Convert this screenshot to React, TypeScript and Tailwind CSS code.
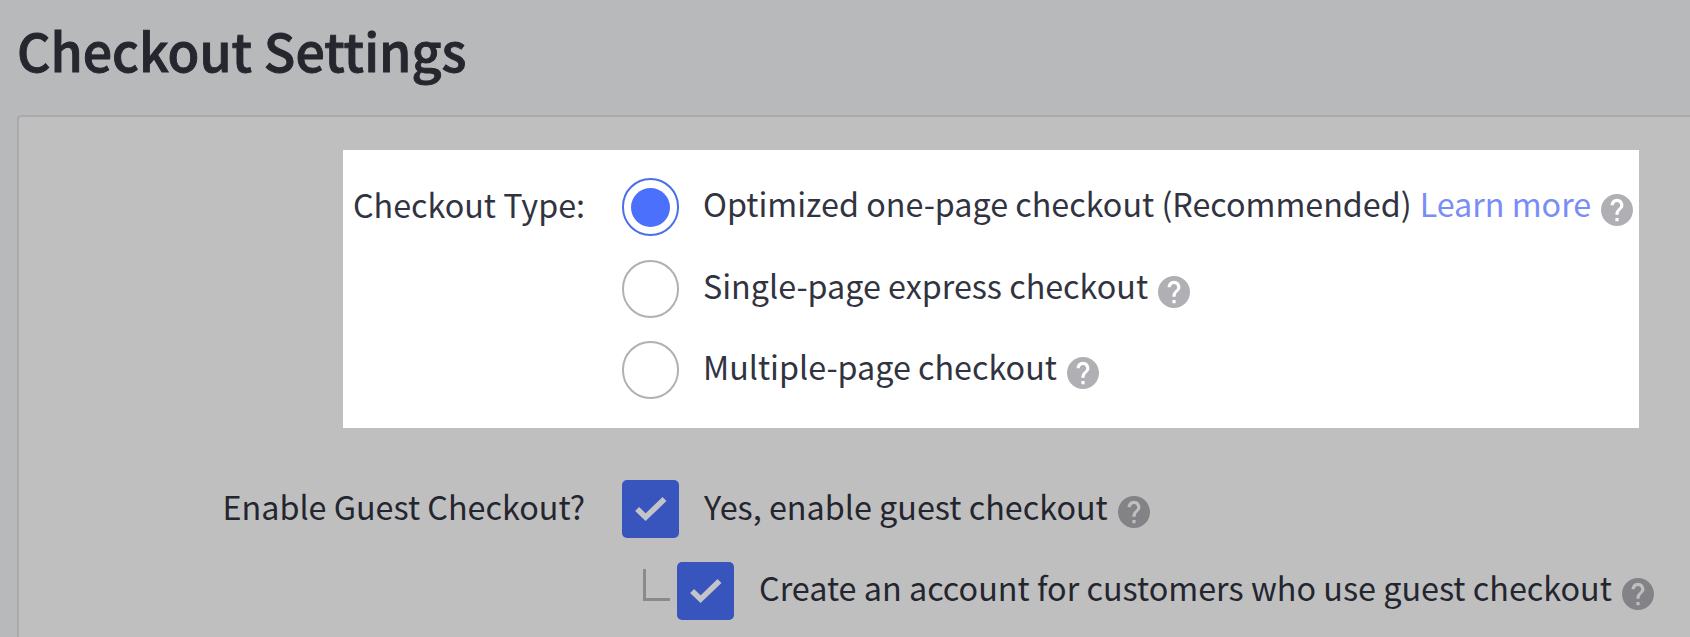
import React from 'react';
import clsx from 'clsx';

interface HelpIconProps {
	dimmed?: boolean;
}

const HelpIcon = ({ dimmed }: HelpIconProps) => (
	<svg
		viewBox="2 2 20 20"
		className={clsx('mt-4 ml-2.5 size-8 shrink-0 fill-current', dimmed ? 'text-[#838387]' : 'text-[#b0b0b4]')}
	>
		<path d="M12 2C6.48 2 2 6.48 2 12s4.48 10 10 10 10-4.48 10-10S17.52 2 12 2zm1 17h-2v-2h2v2zm2.07-7.75l-.9.92C13.45 12.9 13 13.5 13 15h-2v-.5c0-1.1.45-2.1 1.17-2.83l1.24-1.26c.37-.36.59-.86.59-1.41 0-1.1-.9-2-2-2s-2 .9-2 2H8c0-2.21 1.79-4 4-4s4 1.79 4 4c0 .88-.36 1.68-.93 2.25z" />
	</svg>
);

const Radio = ({ checked }: { checked?: boolean }) => (
	<span
		className={clsx(
			'flex h-[58px] w-[57px] shrink-0 items-center justify-center rounded-full border-2',
			checked ? 'border-[#4c6fe8]' : 'border-[#b0b0b6]'
		)}
	>
		{checked && <span className="size-[39px] rounded-full bg-[#4b71fc]" />}
	</span>
);

const Checkbox = () => (
	<span className="flex h-[58px] w-[57px] shrink-0 items-center justify-center rounded-[5px] bg-[#3855bd]">
		<svg viewBox="0 0 32 26" className="h-[26px] w-8">
			<path d="M2.1 12.9l8.5 8.3L29.5 3.1" fill="none" stroke="#c4c4c8" strokeWidth="5.6" />
		</svg>
	</span>
);

const CHECKOUT_TYPES = [
	{ label: 'Optimized one-page checkout (Recommended)', link: 'Learn more', checked: true },
	{ label: 'Single-page express checkout' },
	{ label: 'Multiple-page checkout' },
];

const App = () => {
	return (
		<div className="h-[637px] w-[1690px] overflow-hidden bg-[#b8b9bb] pl-[17px] font-['Noto_Sans_CJK_SC','Noto_Sans',sans-serif] text-[32.35px] leading-[52px] whitespace-nowrap text-[#24262f]">
			<h1 className="flex h-[115px] items-center pb-4 text-[51.9px] font-medium text-[#25262e] [-webkit-text-stroke:0.9px_#25262e]">
				Checkout Settings
			</h1>
			<main className="h-[560px] rounded-tl-[4px] border-t-2 border-l-2 border-[#a8aaad] bg-[#bfbfbf] pt-[33px]">
				<section className="ml-[324px] flex h-[278px] w-[1296px] bg-white pt-7 text-[32.28px] text-[#313440]">
					<div className="w-[242px] shrink-0 text-right">Checkout Type:</div>
					<div className="ml-[37px] flex flex-col gap-[23.5px]">
						{CHECKOUT_TYPES.map(({ label, link, checked }) => (
							<label key={label} className="flex h-[58px]">
								<Radio checked={checked} />
								<span className="-mt-px ml-6">
									{label}
									{link && <a className="ml-2 text-[#788df5]">{link}</a>}
								</span>
								<HelpIcon />
							</label>
						))}
					</div>
				</section>
				<section className="mt-[52px] flex">
					<div className="w-[566px] text-right">Enable Guest Checkout?</div>
					<div className="ml-[37px] flex flex-col gap-6">
						<label className="flex h-[58px]">
							<Checkbox />
							<span className="ml-[25px]">Yes, enable guest checkout</span>
							<HelpIcon dimmed />
						</label>
						<label className="flex h-[58px]">
							<span className="mt-[7px] mr-[7px] ml-[21px] h-8 w-[27px] border-b-3 border-l-3 border-[#8a8a8a]" />
							<Checkbox />
							<span className="-mt-px ml-[25px]">Create an account for customers who use guest checkout</span>
							<HelpIcon dimmed />
						</label>
					</div>
				</section>
			</main>
		</div>
	);
};

export default App;
